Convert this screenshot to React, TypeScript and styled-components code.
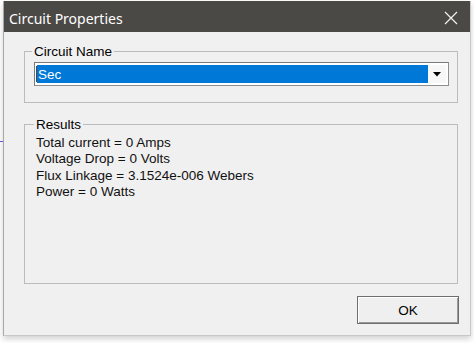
import React from 'react';
import styled, { createGlobalStyle } from 'styled-components';

const GlobalStyle = createGlobalStyle`
  html, body {
    margin: 0;
    padding: 0;
    background: #ffffff;
  }
  body {
    font-family: "Liberation Sans", Arial, sans-serif;
  }
`;

const results = [
  'Total current = 0 Amps',
  'Voltage Drop = 0 Volts',
  'Flux Linkage = 3.1524e-006 Webers',
  'Power = 0 Watts',
];

const App: React.FC = () => {
  return (
    <Page>
      <GlobalStyle />
      <StrayWire />
      <Window>
        <TitleBar>
          <Title>Circuit Properties</Title>
          <CloseButton aria-label="Close">
            <svg width="14" height="14" viewBox="0 0 14 14">
              <path d="M1 1 L13 13 M13 1 L1 13" stroke="#f2f2f2" strokeWidth="1.2" fill="none" />
            </svg>
          </CloseButton>
        </TitleBar>
        <Body>
          <GroupBox>
            <Legend>Circuit Name</Legend>
            <Combo>
              <ComboValue>
                <Caret />
                Sec
              </ComboValue>
              <DropButton>
                <svg width="8" height="5" viewBox="0 0 8 5">
                  <path d="M0 0 H8 L4 4.5 Z" fill="#000" />
                </svg>
              </DropButton>
            </Combo>
          </GroupBox>
          <ResultsBox>
            <Legend>Results</Legend>
            {results.map((line) => (
              <ResultLine key={line}>{line}</ResultLine>
            ))}
          </ResultsBox>
          <Footer>
            <OkButton>OK</OkButton>
          </Footer>
        </Body>
      </Window>
    </Page>
  );
};

const Page = styled.div`
  position: relative;
  width: 474px;
  height: 343px;
  padding: 1px 0 0 3px;
  box-sizing: border-box;
  overflow: hidden;
`;

const StrayWire = styled.div`
  position: absolute;
  left: 0;
  top: 141px;
  width: 3px;
  height: 1px;
  background: #5a5ad8;
`;

const Window = styled.div`
  width: 468px;
  height: 335px;
  display: flex;
  flex-direction: column;
  background: #f0f0f0;
  border-left: 1px solid #a8a8a8;
  border-right: 1px solid #c8c8c8;
  border-bottom: 1px solid #c8c8c8;
  box-sizing: border-box;
  box-shadow: 0 3px 6px rgba(0, 0, 0, 0.18);
`;

const TitleBar = styled.div`
  height: 31px;
  flex: none;
  display: flex;
  align-items: center;
  justify-content: space-between;
  background: #4b4946;
  padding: 0 12px 0 5px;
`;

const Title = styled.span`
  font-family: "Noto Sans", "Open Sans", sans-serif;
  font-size: 14px;
  color: #ffffff;
  padding-top: 3px;
`;

const CloseButton = styled.div`
  width: 14px;
  height: 14px;
  display: flex;
  margin-top: 2px;
`;

const Body = styled.div`
  flex: 1;
  display: flex;
  flex-direction: column;
  padding: 12px 12px 0 20px;
`;

const GroupBox = styled.fieldset`
  margin: 0;
  padding: 3px 8px 16px 9px;
  border: 1px solid #bcbcbc;
  min-width: 0;
`;

const ResultsBox = styled(GroupBox)`
  margin-top: 14px;
  height: 167px;
  box-sizing: border-box;
  padding: 3px 8px 0 11px;
`;

const Legend = styled.legend`
  margin-left: -2px;
  padding: 0 2px;
  font-size: 13.5px;
  line-height: 15px;
  color: #000;
`;

const Combo = styled.div`
  height: 24px;
  display: flex;
  box-sizing: border-box;
  border: 1px solid #8e8e8e;
  border-top-color: #7a7a7a;
  border-left-color: #7a7a7a;
  background: #ffffff;
  padding: 2px;
`;

const ComboValue = styled.div`
  flex: 1;
  position: relative;
  display: flex;
  align-items: center;
  background: #0078d7;
  color: #ffffff;
  font-size: 13.5px;
  padding-left: 1px;
`;

const Caret = styled.span`
  position: absolute;
  left: -1px;
  top: 1px;
  bottom: 1px;
  width: 1px;
  background: #4a4a4a;
`;

const DropButton = styled.div`
  width: 18px;
  display: flex;
  align-items: center;
  justify-content: center;
  background: #f7f7f7;
  padding-top: 1px;
`;

const ResultLine = styled.div`
  font-size: 13.5px;
  line-height: 16.3px;
  color: #111;
`;

const Footer = styled.div`
  display: flex;
  justify-content: flex-end;
  margin-top: 12px;
  margin-right: -1px;
`;

const OkButton = styled.button`
  width: 102px;
  height: 28px;
  font-family: "Liberation Sans", Arial, sans-serif;
  font-size: 13.5px;
  color: #000;
  background: #efefef;
  border: 1px solid #6e6e6e;
  box-shadow: inset 1px 1px 0 #ffffff, inset -1px -1px 0 #9a9a9a;
  padding: 0;
`;

export default App;
